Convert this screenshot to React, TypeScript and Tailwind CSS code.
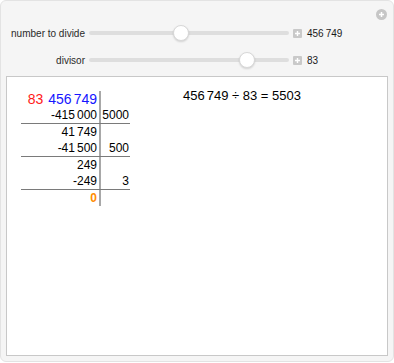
type SliderProps = {
  label: string;
  value: string;
  thumbLeft: string;
};

// digit groups with a narrow gap, like 456 749
function Num({ text, className = "" }: { text: string; className?: string }) {
  const parts = text.split(" ");
  return (
    <span className={className}>
      {parts.map((p, i) => (
        <span key={i} className={i > 0 ? "ml-[2px]" : ""}>
          {p}
        </span>
      ))}
    </span>
  );
}

function PlusBox() {
  return (
    <div className="w-[9px] h-[9px] bg-[#c9c9c9] rounded-[1px] flex items-center justify-center">
      <svg width="7" height="7" viewBox="0 0 7 7">
        <path d="M3.5 1v5M1 3.5h5" stroke="#fff" strokeWidth="1.4" />
      </svg>
    </div>
  );
}

function SliderRow({ label, value, thumbLeft }: SliderProps) {
  return (
    <div className="flex items-center h-[20px]">
      <div className="w-[84px] text-right text-[10px] text-[#2a2a2a]">{label}</div>
      <div className="ml-[4px] w-[200px] h-[4px] rounded-full bg-[#dedede] relative">
        <div
          className={`absolute top-[-6px] w-[16px] h-[16px] rounded-full bg-white border border-[#d8d8d8] shadow-[0_1px_2px_rgba(0,0,0,0.15)] ${thumbLeft}`}
        />
      </div>
      <div className="ml-[4px]">
        <PlusBox />
      </div>
      <Num text={value} className="ml-[5px] text-[10px] text-[#1a1a1a]" />
    </div>
  );
}

const rows = [
  { left: "-415 000", right: "5000", line: true },
  { left: "41 749", right: "", line: false },
  { left: "-41 500", right: "500", line: true },
  { left: "249", right: "", line: false },
  { left: "-249", right: "3", line: true },
];

export default function App() {
  return (
    <div className="w-[394px] h-[363px] bg-white" style={{ fontFamily: '"Liberation Sans", Arial, sans-serif' }}>
      <div className="w-[394px] h-[362px] bg-[#f5f5f5] border border-[#e3e3e3] rounded-[6px] relative pt-[22px]">
        <div className="absolute right-[6px] top-[8px] w-[11px] h-[11px] rounded-full bg-[#c6c6c6] flex items-center justify-center">
          <svg width="7" height="7" viewBox="0 0 7 7">
            <path d="M3.5 1v5M1 3.5h5" stroke="#fff" strokeWidth="1.5" />
          </svg>
        </div>

        <div className="flex flex-col gap-[7px]">
          <SliderRow label="number to divide" value="456 749" thumbLeft="left-[84px]" />
          <SliderRow label="divisor" value="83" thumbLeft="left-[150px]" />
        </div>

        <div className="mt-[6px] ml-[5px] w-[382px] h-[280px] bg-white border border-[#c8c8c8] flex pt-[11px] pl-[14px]">
          <div className="mt-[3px] w-[109px] text-[12px] text-black">
            <div className="flex h-[16px] items-center">
              <div className="w-[78px] text-right pr-[2px] text-[14px] leading-[16px] whitespace-nowrap">
                <span className="text-[#ff1a1a]">83</span>
                <Num text="456 749" className="ml-[5px] text-[#1515ff]" />
              </div>
              <div className="w-[2px] h-full bg-[#a8a8a8]" />
              <div className="w-[29px]" />
            </div>
            {rows.map((r, i) => (
              <div key={i} className={`flex h-[16px] items-center ${r.line ? "border-b border-[#7a7a7a] box-content" : ""}`}>
                <div className="w-[78px] text-right pr-[2px] leading-[16px]">
                  <Num text={r.left} />
                </div>
                <div className="w-[2px] h-full bg-[#a8a8a8]" />
                <div className="w-[29px] text-right pr-[1px] leading-[16px]">{r.right}</div>
              </div>
            ))}
            <div className="flex h-[16px] items-center">
              <div className="w-[78px] text-right pr-[2px] leading-[16px] font-bold text-[#ff8c00]">0</div>
              <div className="w-[2px] h-full bg-[#a8a8a8]" />
              <div className="w-[29px]" />
            </div>
          </div>
          <div className="ml-[53px] text-[13px] leading-[16px] text-black whitespace-nowrap">
            <Num text="456 749" /> ÷ 83 = 5503
          </div>
        </div>
      </div>
    </div>
  );
}
